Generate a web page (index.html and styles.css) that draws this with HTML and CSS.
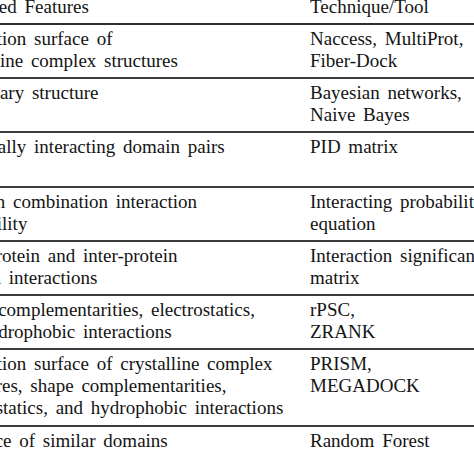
FILE: index.html
```html
<!DOCTYPE html>
<html lang="en">
<head>
<meta charset="utf-8">
<title>Domain-based methods</title>
<link rel="stylesheet" href="styles.css">
</head>
<body>
<table class="tbl">
  <thead>
    <tr>
      <th class="feat">Extracted Features</th>
      <th class="tool">Technique/Tool</th>
    </tr>
  </thead>
  <tbody>
    <tr>
      <td class="feat">Interaction surface of<br>crystalline complex structures</td>
      <td class="tool">Naccess, MultiProt,<br>Fiber-Dock</td>
    </tr>
    <tr>
      <td class="feat">Secondary structure</td>
      <td class="tool">Bayesian networks,<br>Naive Bayes</td>
    </tr>
    <tr class="tall">
      <td class="feat">Potentially interacting domain pairs</td>
      <td class="tool">PID matrix</td>
    </tr>
    <tr>
      <td class="feat">Domain combination interaction<br>probability</td>
      <td class="tool">Interacting probability<br>equation</td>
    </tr>
    <tr>
      <td class="feat">Intra-protein and inter-protein<br>domain interactions</td>
      <td class="tool">Interaction significance<br>matrix</td>
    </tr>
    <tr>
      <td class="feat">Shape complementarities, electrostatics,<br>and hydrophobic interactions</td>
      <td class="tool">rPSC,<br>ZRANK</td>
    </tr>
    <tr>
      <td class="feat">Interaction surface of crystalline complex<br>structures, shape complementarities,<br>electrostatics, and hydrophobic interactions</td>
      <td class="tool">PRISM,<br>MEGADOCK</td>
    </tr>
    <tr>
      <td class="feat">Presence of similar domains</td>
      <td class="tool">Random Forest</td>
    </tr>
  </tbody>
</table>
</body>
</html>
```

FILE: styles.css
```css
html, body {
  margin: 0;
  padding: 0;
  background: #ffffff;
  overflow: hidden;
}

body {
  width: 474px;
  height: 474px;
}

.tbl {
  border-collapse: collapse;
  table-layout: fixed;
  width: 620px;
  margin: -7px 0 0 -56px;
  font-family: "Liberation Serif", "Times New Roman", serif;
  font-size: 19px;
  line-height: 22.1px;
  color: #141414;
  word-spacing: 3px;
}

.tbl th,
.tbl td {
  text-align: left;
  font-weight: normal;
  vertical-align: top;
  white-space: nowrap;
  padding: 3px 0 5px 0;
  overflow: hidden;
}

.tbl .feat {
  width: 339px;
  padding-right: 27px;
}

.tbl thead tr {
  border-bottom: 2px solid #2f2f2f;
}

.tbl tbody tr + tr {
  border-top: 2px solid #3d3d3d;
}

.tbl .tall td {
  height: 44.2px;
}
```
